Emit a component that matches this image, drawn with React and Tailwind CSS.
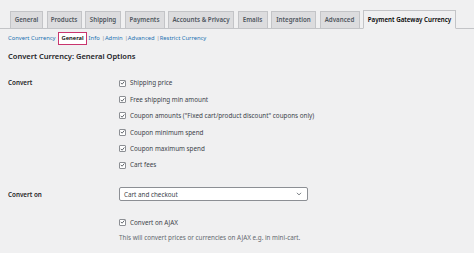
import React from 'react';

const tabs = [
  { label: 'General', w: 'w-[33px]' },
  { label: 'Products', w: 'w-[35px]' },
  { label: 'Shipping', w: 'w-[36px]' },
  { label: 'Payments', w: 'w-[40px]' },
  { label: 'Accounts & Privacy', w: 'w-[66px]' },
  { label: 'Emails', w: 'w-[30px]' },
  { label: 'Integration', w: 'w-[45px]' },
  { label: 'Advanced', w: 'w-[40px]' },
];

const convertItems = [
  'Shipping price',
  'Free shipping min amount',
  'Coupon amounts ("Fixed cart/product discount" coupons only)',
  'Coupon minimum spend',
  'Coupon maximum spend',
  'Cart fees',
];

function Check() {
  return (
    <span className="flex items-center justify-center w-[7px] h-[7px] bg-white border border-[#8c8f94] rounded-[1px] shrink-0">
      <svg width="6" height="6" viewBox="0 0 10 10" fill="none">
        <path d="M2 5.2L4.2 7.4L8.2 2.6" stroke="#3c434a" strokeWidth="1.6" strokeLinecap="round" strokeLinejoin="round" />
      </svg>
    </span>
  );
}

export default function App() {
  return (
    <div className="w-[474px] h-[253px] bg-[#f0f0f1] overflow-hidden text-[#1d2327]" style={{ fontFamily: '"Noto Sans", "Open Sans", sans-serif' }}>
      {/* Tabs */}
      <div className="pt-[10px] pl-[10px] flex items-end gap-[3.5px] border-b border-[#c3c4c7] h-[29px]">
        {tabs.map((t) => (
          <div key={t.label} className={`${t.w} h-[18px] -mb-px flex items-center justify-center bg-[#dcdcde] border border-[#c3c4c7] text-[6.2px] font-semibold text-[#50575e] whitespace-nowrap`}>
            {t.label}
          </div>
        ))}
        <div className="w-[93px] h-[19px] -mb-px flex items-center justify-center bg-[#f0f0f1] border border-[#c3c4c7] border-b-[#f0f0f1] text-[6.2px] font-semibold text-black whitespace-nowrap">
          Payment Gateway Currency
        </div>
      </div>

      {/* Sub links */}
      <div className="flex items-center h-[16px] mt-px pl-[8px] text-[5.8px] text-[#2271b1] whitespace-nowrap">
        <span>Convert Currency</span>
        <span className="ml-[3px] px-[2px] h-[13px] flex items-center border border-[#c9356e] bg-white text-black font-semibold">General</span>
        <span className="ml-[2px]">Info</span>
        <span className="ml-[2px] text-[#8c8f94]">|</span>
        <span>Admin</span>
        <span className="ml-[2px] text-[#8c8f94]">|</span>
        <span>Advanced</span>
        <span className="ml-[2px] text-[#8c8f94]">|</span>
        <span>Restrict Currency</span>
      </div>

      {/* Heading */}
      <h2 className="pl-[8px] mt-[6px] h-[10px] flex items-center text-[7.5px] font-semibold">Convert Currency: General Options</h2>

      {/* Form */}
      <div className="pl-[8px] mt-[13px] grid grid-cols-[111px_1fr] text-[6.3px]">
        <div className="pt-[3px] font-semibold">Convert</div>
        <div className="flex flex-col">
          {convertItems.map((item) => (
            <div key={item} className="h-[16.4px] flex items-center gap-[4px] text-[#3c434a] whitespace-nowrap">
              <Check />
              <span>{item}</span>
            </div>
          ))}
        </div>

        <div className="mt-[14px] h-[14px] flex items-center font-semibold">Convert on</div>
        <div className="mt-[14px]">
          <div className="w-[189px] h-[14px] bg-white border border-[#8c8f94] rounded-[2px] flex items-center justify-between pl-[4px] pr-[5px] text-[#3c434a]">
            <span>Cart and checkout</span>
            <svg width="6" height="6" viewBox="0 0 10 10" fill="none">
              <path d="M2 3.5L5 6.5L8 3.5" stroke="#50575e" strokeWidth="1.3" strokeLinecap="round" strokeLinejoin="round" />
            </svg>
          </div>
        </div>

        <div />
        <div className="mt-[14px] flex flex-col">
          <div className="h-[14px] flex items-center gap-[4px] text-[#3c434a]">
            <Check />
            <span>Convert on AJAX</span>
          </div>
          <div className="mt-[2px] h-[12px] flex items-center text-[#646970]">
            This will convert prices or currencies on AJAX e.g. in mini-cart.
          </div>
        </div>
      </div>
    </div>
  );
}
